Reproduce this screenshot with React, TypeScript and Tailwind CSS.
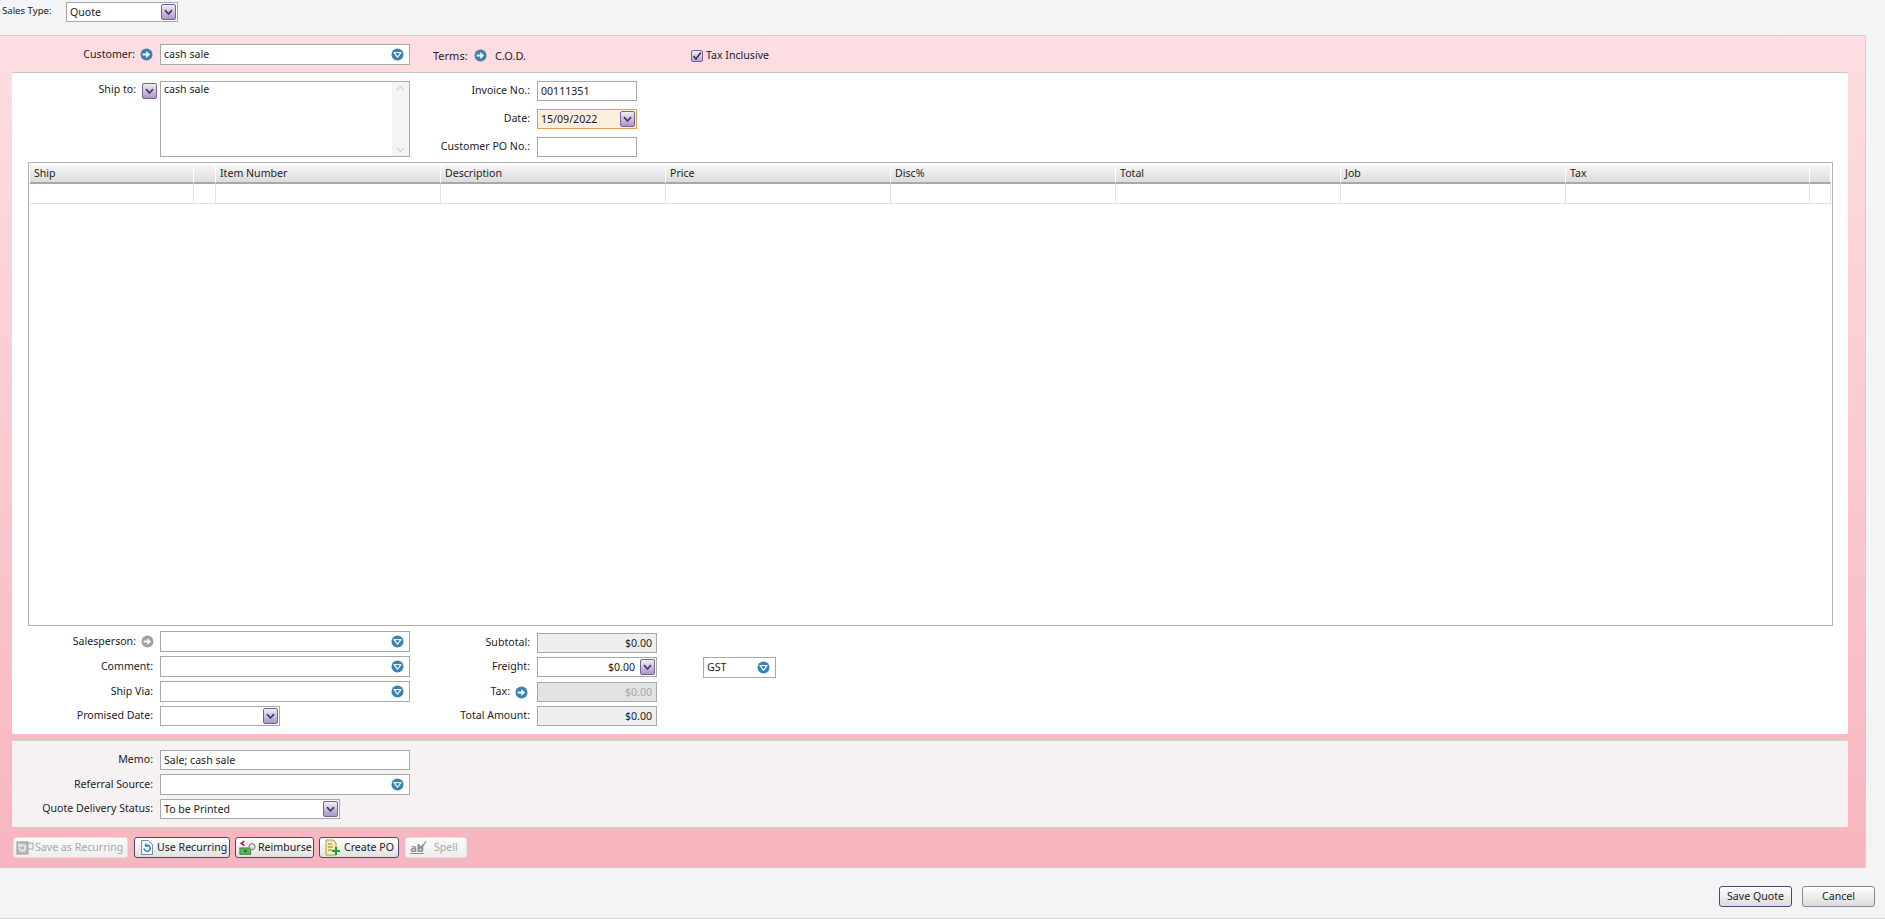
import type { ReactNode } from "react";

function PurpleDrop() {
  return (
    <span className="flex h-[16px] w-[15px] shrink-0 items-center justify-center rounded-[2px] border border-[#75619a] bg-gradient-to-b from-[#f1edf6] to-[#ab98c6]">
      <svg width="9" height="7" viewBox="0 0 9 7">
        <path d="M1 1.2 4.5 5 8 1.2" fill="none" stroke="#4a3a6b" strokeWidth="1.8" />
      </svg>
    </span>
  );
}

function BlueDrop() {
  return (
    <svg width="13" height="13" viewBox="0 0 13 13" className="shrink-0">
      <circle cx="6.5" cy="6.5" r="6" fill="#3a82b0" />
      <path d="M3 4.6h7L6.5 9.2Z" fill="#2f6f9b" stroke="#e8f3f9" strokeWidth="1.4" strokeLinejoin="round" />
    </svg>
  );
}

function GoArrow({ gray }: { gray?: boolean }) {
  return (
    <svg width="13" height="13" viewBox="0 0 13 13" className="shrink-0">
      <circle cx="6.5" cy="6.5" r="6" fill={gray ? "#a0a0a0" : "#3a82b0"} />
      <path d="M2.6 5.4h3.6V3l4 3.5-4 3.5V7.6H2.6Z" fill="#f4f8fb" />
    </svg>
  );
}

function Box({
  className,
  children,
}: {
  className: string;
  children?: ReactNode;
}) {
  return (
    <div className={`flex shrink-0 items-center border border-[#a8a8a8] pl-[3px] ${className}`}>
      {children}
    </div>
  );
}

function BlueField({ value }: { value?: string }) {
  return (
    <Box className="h-[21px] w-[250px] bg-white pr-[5px]">
      <span className="flex-1">{value}</span>
      <BlueDrop />
    </Box>
  );
}

function FieldRow({
  labelW,
  label,
  arrow,
  arrowGap,
  mt,
  children,
}: {
  labelW: string;
  label: string;
  arrow?: "blue" | "gray";
  arrowGap?: string;
  mt?: string;
  children: ReactNode;
}) {
  return (
    <div className={`flex items-center ${mt ?? ""}`}>
      <div className={`flex shrink-0 items-center justify-end ${labelW}`}>
        <span className="-mt-[1px] whitespace-nowrap">{label}</span>
        {arrow && (
          <span className={`ml-[5px] ${arrowGap ?? "mr-[6px]"}`}>
            <GoArrow gray={arrow === "gray"} />
          </span>
        )}
        {!arrow && <span className="w-[7px]" />}
      </div>
      {children}
    </div>
  );
}

function ActionButton({
  label,
  icon,
  className,
  disabled,
}: {
  label: string;
  icon: ReactNode;
  className: string;
  disabled?: boolean;
}) {
  return (
    <button
      className={`flex h-[21px] items-center whitespace-nowrap rounded-[3px] border bg-gradient-to-b pl-[2px] ${
        disabled
          ? "border-[#e2e0e2] from-[#fbfbfb] to-[#eeeeee] text-[#a8a8a8]"
          : "border-[#54456f] from-white to-[#e2e2e2] text-[#222]"
      } ${className}`}
    >
      {icon}
      {label}
    </button>
  );
}

const columns = ["Ship", "", "Item Number", "Description", "Price", "Disc%", "Total", "Job", "Tax", ""];

export default function App() {
  return (
    <div className="relative flex h-[919px] w-[1885px] flex-col overflow-hidden border-b border-[#d8d8d8] bg-[#f2f4f6] font-['Noto_Sans',sans-serif] text-[10.6px] leading-none text-[#222]">
      {/* sales type */}
      <div className="flex h-[35px] shrink-0 items-start pt-[2px]">
        <span className="ml-[2px] mt-[4px] w-[64px] text-[9.6px]">Sales Type:</span>
        <Box className="h-[20px] w-[112px] justify-between bg-white pr-[1px]">
          Quote
          <PurpleDrop />
        </Box>
      </div>

      <div className="flex h-[833px] w-[1866px] shrink-0 flex-col rounded-r-[2px] border-t border-r border-[#cfcfcf] bg-gradient-to-b from-[#fddee2] to-[#f7b5bf]">
        {/* customer line */}
        <div className="flex h-[36px] shrink-0 items-center pt-[1px]">
          <FieldRow labelW="w-[160px]" label="Customer:" arrow="blue" arrowGap="mr-[7px]">
            <BlueField value="cash sale" />
          </FieldRow>
          <span className="ml-[23px] mt-[2px] w-[41px] text-[11px]">Terms:</span>
          <span className="mt-[2px]">
            <GoArrow />
          </span>
          <span className="ml-[8px] mt-[2px] w-[196px] text-[11px]">C.O.D.</span>
          <span className="mt-[2px] flex items-center">
            <span className="mr-[3px] flex h-[12px] w-[12px] items-center justify-center rounded-[2px] border border-[#75619a] bg-gradient-to-b from-[#f1edf6] to-[#b8a8d0]">
              <svg width="10" height="10" viewBox="0 0 10 10">
                <path d="M1.5 5 4 8 8.8 1.5" fill="none" stroke="#3e3060" strokeWidth="1.6" />
              </svg>
            </span>
            Tax Inclusive
          </span>
        </div>

        {/* white body */}
        <div className="ml-[12px] flex h-[662px] w-[1836px] shrink-0 flex-col rounded-[2px] border-t border-[#c4c4c4] bg-white">
          <div className="flex h-[89px] shrink-0 pt-[8px]">
            <div className="flex">
              <div className="flex w-[148px] shrink-0 justify-end pt-[2px]">
                <span className="mr-[6px] mt-[1px] whitespace-nowrap">Ship to:</span>
                <span className="mr-[3px]">
                  <PurpleDrop />
                </span>
              </div>
              <div className="flex h-[76px] w-[250px] shrink-0 justify-between border border-[#a8a8a8] pl-[3px] pt-[2px]">
                cash sale
                <div className="-mt-[2px] flex w-[17px] flex-col items-center justify-between bg-[#f4f4f4] py-[3px]">
                  <svg width="9" height="6" viewBox="0 0 9 6">
                    <path d="M1 5 4.5 1.5 8 5" fill="none" stroke="#d4d4d4" strokeWidth="1.2" />
                  </svg>
                  <svg width="9" height="6" viewBox="0 0 9 6">
                    <path d="M1 1 4.5 4.5 8 1" fill="none" stroke="#d4d4d4" strokeWidth="1.2" />
                  </svg>
                </div>
              </div>
            </div>
            <div className="flex flex-col">
              <FieldRow labelW="w-[127px]" label="Invoice No.:">
                <Box className="h-[20px] w-[100px] bg-white">00111351</Box>
              </FieldRow>
              <FieldRow labelW="w-[127px]" label="Date:" mt="mt-[8px]">
                <div className="flex h-[20px] w-[100px] items-center justify-between border border-[#e0a050] bg-[#fdeede] pl-[3px] pr-[1px]">
                  15/09/2022
                  <PurpleDrop />
                </div>
              </FieldRow>
              <FieldRow labelW="w-[127px]" label="Customer PO No.:" mt="mt-[8px]">
                <Box className="h-[20px] w-[100px] bg-white" />
              </FieldRow>
            </div>
          </div>

          {/* line items */}
          <div className="ml-[16px] h-[464px] w-[1805px] shrink-0 border border-[#b0b0b0] px-px pt-[2px]">
            <div className="grid grid-cols-[164px_22px_225px_225px_225px_225px_225px_225px_244px_21px]">
              {columns.map((c, i) => (
                <div
                  key={i}
                  className="flex h-[19px] items-center border-r border-b-2 border-r-white border-b-[#a8a8a8] bg-gradient-to-b from-[#f6f6f6] to-[#dcdcdc] pl-[4px]"
                >
                  {c}
                </div>
              ))}
              {columns.map((_, i) => (
                <div key={i} className="h-[20px] border-r border-b border-[#e2e2e2]" />
              ))}
            </div>
          </div>

          {/* totals */}
          <div className="flex">
            <div className="flex flex-col pt-[5px]">
              <FieldRow labelW="w-[148px]" label="Salesperson:" arrow="gray">
                <BlueField />
              </FieldRow>
              <FieldRow labelW="w-[148px]" label="Comment:" mt="mt-[4px]">
                <BlueField />
              </FieldRow>
              <FieldRow labelW="w-[148px]" label="Ship Via:" mt="mt-[4px]">
                <BlueField />
              </FieldRow>
              <FieldRow labelW="w-[148px]" label="Promised Date:" mt="mt-[4px]">
                <Box className="h-[20px] w-[120px] justify-end bg-white pr-[1px]">
                  <PurpleDrop />
                </Box>
              </FieldRow>
            </div>
            <div className="flex flex-col pt-[7px]">
              <FieldRow labelW="w-[127px]" label="Subtotal:">
                <Box className="h-[20px] w-[120px] justify-end bg-[#efefef] pr-[4px]">$0.00</Box>
              </FieldRow>
              <FieldRow labelW="w-[127px]" label="Freight:" mt="mt-[4px]">
                <Box className="h-[20px] w-[120px] justify-end bg-white pr-[1px]">
                  <span className="mr-[5px]">$0.00</span>
                  <PurpleDrop />
                </Box>
              </FieldRow>
              <FieldRow labelW="w-[127px]" label="Tax:" arrow="blue" arrowGap="mr-[9px]" mt="mt-[5px]">
                <Box className="h-[20px] w-[120px] justify-end bg-[#e2e2e2] pr-[4px] text-[#aaa]">$0.00</Box>
              </FieldRow>
              <FieldRow labelW="w-[127px]" label="Total Amount:" mt="mt-[4px]">
                <Box className="h-[20px] w-[120px] justify-end bg-[#efefef] pr-[4px]">$0.00</Box>
              </FieldRow>
            </div>
            <div className="ml-[46px] pt-[31px]">
              <Box className="h-[21px] w-[73px] justify-between bg-white pr-[5px]">
                GST
                <BlueDrop />
              </Box>
            </div>
          </div>
        </div>

        {/* memo panel */}
        <div className="ml-[12px] mt-[6px] flex h-[87px] w-[1836px] shrink-0 flex-col rounded-[2px] border-t border-[#d4d4d4] bg-[#f6f1f3] pt-[9px]">
          <FieldRow labelW="w-[148px]" label="Memo:">
            <Box className="h-[20px] w-[250px] bg-white">Sale; cash sale</Box>
          </FieldRow>
          <FieldRow labelW="w-[148px]" label="Referral Source:" mt="mt-[4px]">
            <BlueField />
          </FieldRow>
          <FieldRow labelW="w-[148px]" label="Quote Delivery Status:" mt="mt-[4px]">
            <Box className="h-[20px] w-[180px] justify-between bg-white pr-[1px]">
              To be Printed
              <PurpleDrop />
            </Box>
          </FieldRow>
        </div>

        {/* action buttons */}
        <div className="ml-[13px] mt-[10px] flex gap-[5px]">
          <ActionButton
            disabled
            label="Save as Recurring"
            className="w-[115px]"
            icon={
              <svg width="18" height="16" viewBox="0 0 18 16" className="mr-[1px]">
                <rect x="1" y="2" width="11" height="12" fill="#bdbdbd" stroke="#9a9a9a" />
                <path d="M3.5 8a3 3 0 1 0 1-2.4M3 3.5v2.5h2.5" fill="none" stroke="#f4f4f4" strokeWidth="1.3" />
                <rect x="12" y="3" width="5" height="6" fill="#f0f0f0" stroke="#a8a8a8" />
              </svg>
            }
          />
          <ActionButton
            label="Use Recurring"
            className="ml-px w-[96px]"
            icon={
              <svg width="16" height="17" viewBox="0 0 16 17" className="ml-[2px] mr-[2px]">
                <path d="M2.5 1.5h7l4 4v10h-11Z" fill="#f2f6fa" stroke="#7b8ea5" />
                <path d="M5.2 9.5a3 3 0 1 0 1.4-2.7M6.6 4.7v2.4h2.2" fill="none" stroke="#2d7db8" strokeWidth="1.5" />
              </svg>
            }
          />
          <ActionButton
            label="Reimburse"
            className="w-[79px]"
            icon={
              <svg width="18" height="17" viewBox="0 0 20 17" className="ml-[1px] mr-[1px]">
                <path d="M6 1.5 2.5 4 6 6.5" fill="none" stroke="#b02030" strokeWidth="1.8" />
                <rect x="1" y="9" width="12" height="7" fill="#5cb85c" stroke="#2f7f35" />
                <circle cx="7" cy="12.5" r="1.6" fill="#1f6b2a" />
                <circle cx="14.5" cy="7.5" r="3.5" fill="#cfcfcf" stroke="#777" />
                <circle cx="14.5" cy="7.5" r="1.4" fill="#f4f4f4" />
              </svg>
            }
          />
          <ActionButton
            label="Create PO"
            className="w-[80px]"
            icon={
              <svg width="18" height="17" viewBox="0 0 18 17" className="ml-[2px] mr-[2px]">
                <path d="M2 1h7l3 3v12H2Z" fill="#f9edb4" stroke="#a89a50" />
                <path d="M4 5h4M4 8h5M4 11h4" stroke="#8a7a40" />
                <path d="M12 8v8M8 12h8" stroke="#2b9a3a" strokeWidth="2.2" />
              </svg>
            }
          />
          <ActionButton
            disabled
            label="Spell"
            className="ml-px w-[62px]"
            icon={
              <span className="relative ml-[1px] mr-[9px] w-[16px] text-[11px] font-bold text-[#8d8d8d] underline">
                ab
                <svg width="9" height="10" viewBox="0 0 9 10" className="absolute -top-[2px] left-[9px]">
                  <path d="M1 5.5 3.5 8.5 8 1M1 9 6 4" fill="none" stroke="#8d8d8d" strokeWidth="1.2" />
                </svg>
              </span>
            }
          />
        </div>
      </div>

      {/* save / cancel */}
      <div className="mt-[18px] flex shrink-0 justify-end pr-[10px]">
        <button className="h-[21px] w-[73px] rounded-[3px] border border-[#54456f] bg-gradient-to-b from-white to-[#dcdcdc]">
          Save Quote
        </button>
        <button className="ml-[10px] h-[21px] w-[73px] rounded-[3px] border border-[#8a8a8a] bg-gradient-to-b from-white to-[#dcdcdc]">
          Cancel
        </button>
      </div>
    </div>
  );
}
